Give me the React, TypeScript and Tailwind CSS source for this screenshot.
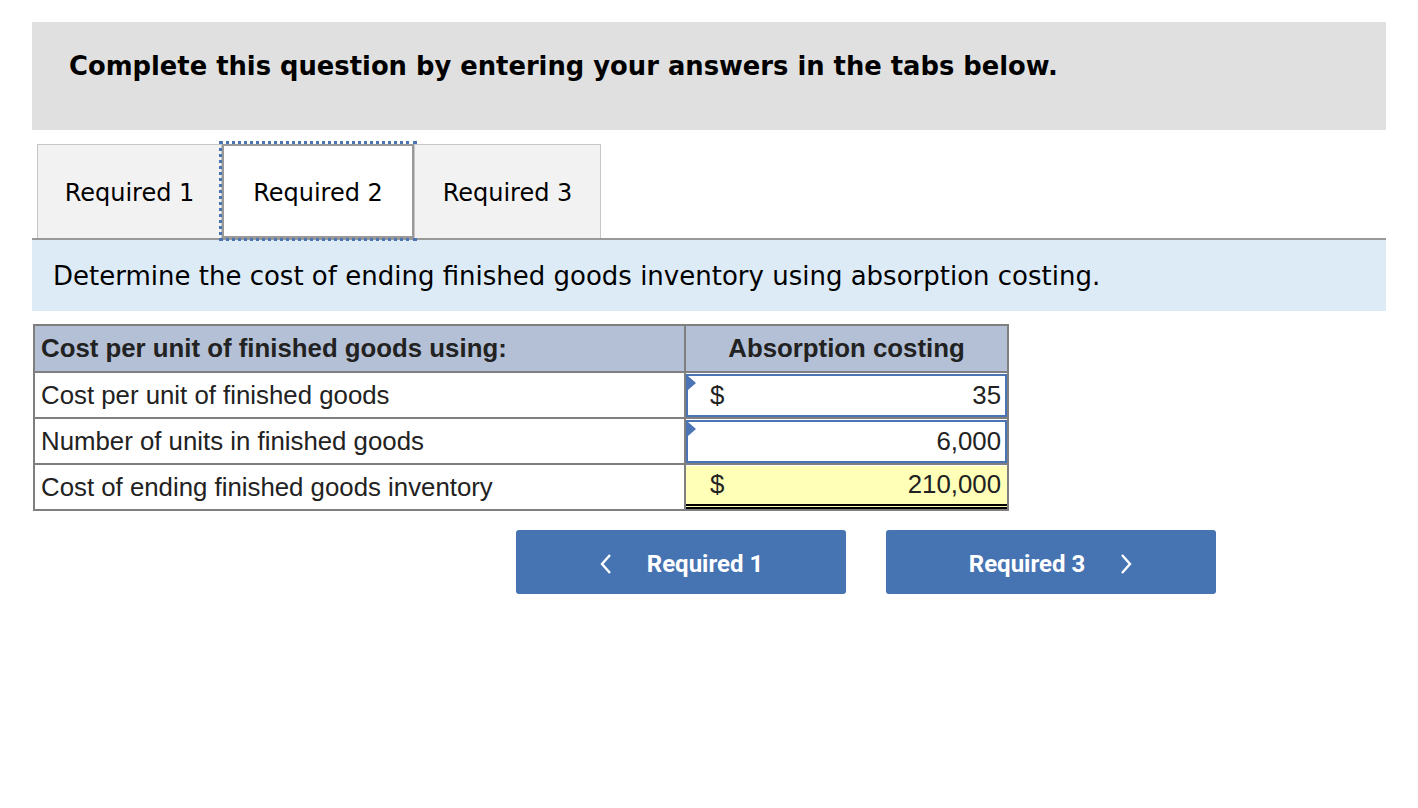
import React from "react";

const verdana = { fontFamily: '"DejaVu Sans", Verdana, sans-serif' };
const arial = { fontFamily: '"Liberation Sans", Arial, sans-serif' };
const roboto = { fontFamily: 'Roboto, "Liberation Sans", sans-serif' };

function Corner() {
  return <span className="absolute left-0 top-0 h-0 w-0 border-t-[7px] border-b-[7px] border-l-[8px] border-t-transparent border-b-transparent border-l-[#4a74b4]" />;
}

export default function App() {
  return (
    <div className="min-h-[808px] w-[1418px] bg-white pt-[22px] pl-[32px]">
      {/* instructions banner */}
      <div className="flex h-[108px] w-[1354px] items-start bg-[#e0e0e0] pl-[37px] pt-[25px]">
        <h1 className="text-[25.8px] font-bold text-black" style={verdana}>
          Complete this question by entering your answers in the tabs below.
        </h1>
      </div>

      {/* tabs */}
      <div className="mt-[14px] flex h-[96px] w-[1354px] items-end border-b-2 border-[#999999] pl-[5px]" style={verdana}>
        <button className="h-[94px] w-[185px] border border-b-0 border-[#c6c6c6] bg-[#f2f2f2] pt-[3px] text-[24px] text-black">
          Required 1
        </button>
        <button className="h-[94px] w-[192px] border-2 border-[#999999] bg-white pt-[3px] text-[24px] text-black outline-dotted outline-[3px] outline-[#4a74b4]">
          Required 2
        </button>
        <button className="h-[94px] w-[187px] border border-b-0 border-[#c6c6c6] bg-[#f2f2f2] pt-[3px] text-[24px] text-black">
          Required 3
        </button>
      </div>

      <div className="flex h-[71px] w-[1354px] items-center bg-[#ddebf7] pl-[21px] pt-[2px]">
        <p className="text-[26px] text-black" style={verdana}>
          Determine the cost of ending finished goods inventory using absorption costing.
        </p>
      </div>

      {/* table */}
      <table className="mt-[13px] ml-[1px] w-[976px] border-collapse text-[25.8px] text-[#222]" style={arial}>
        <tbody>
          <tr className="h-[47px] bg-[#b4c0d6]">
            <th className="w-[651px] border-2 border-[#7f7f7f] px-[6px] text-left font-bold">
              Cost per unit of finished goods using:
            </th>
            <th className="border-2 border-[#7f7f7f] text-center font-bold">Absorption costing</th>
          </tr>
          <tr className="h-[46px]">
            <td className="border-2 border-[#7f7f7f] px-[6px]">Cost per unit of finished goods</td>
            <td className="border-2 border-[#7f7f7f] p-0">
              <div className="relative flex h-[43px] items-center justify-between border-2 border-[#4a74b4] bg-white pl-[22px] pr-[4px]">
                <Corner />
                <span>$</span>
                <span>35</span>
              </div>
            </td>
          </tr>
          <tr className="h-[46px]">
            <td className="border-2 border-[#7f7f7f] px-[6px]">Number of units in finished goods</td>
            <td className="border-2 border-[#7f7f7f] p-0">
              <div className="relative flex h-[43px] items-center justify-end border-2 border-[#4a74b4] bg-white pr-[4px]">
                <Corner />
                <span>6,000</span>
              </div>
            </td>
          </tr>
          <tr className="h-[46px]">
            <td className="border-2 border-[#7f7f7f] p-0">
              <div className="px-[6px]">Cost of ending finished goods inventory</div>
            </td>
            <td className="border-2 border-[#7f7f7f] p-0">
              <div className="flex h-[43px] items-center justify-between border-b-[5px] border-double border-black bg-[#ffffb8] pl-[24px] pr-[6px]">
                <span>$</span>
                <span>210,000</span>
              </div>
            </td>
          </tr>
        </tbody>
      </table>

      {/* nav buttons */}
      <div className="mt-[19px] flex gap-[40px] pl-[484px]" style={roboto}>
        <button className="flex h-[64px] w-[330px] items-center justify-center gap-[34px] rounded-[3px] bg-[#4673b1] pt-[3px] text-[24px] font-bold text-white">
          <svg width="14" height="22" viewBox="0 0 14 22" fill="none" stroke="white" strokeWidth="2.4">
            <path d="M11 2 L3 11 L11 20" />
          </svg>
          <span>Required 1</span>
        </button>
        <button className="flex h-[64px] w-[330px] items-center justify-center gap-[34px] rounded-[3px] bg-[#4673b1] pt-[3px] text-[24px] font-bold text-white">
          <span>Required 3</span>
          <svg width="14" height="22" viewBox="0 0 14 22" fill="none" stroke="white" strokeWidth="2.4">
            <path d="M3 2 L11 11 L3 20" />
          </svg>
        </button>
      </div>
    </div>
  );
}
